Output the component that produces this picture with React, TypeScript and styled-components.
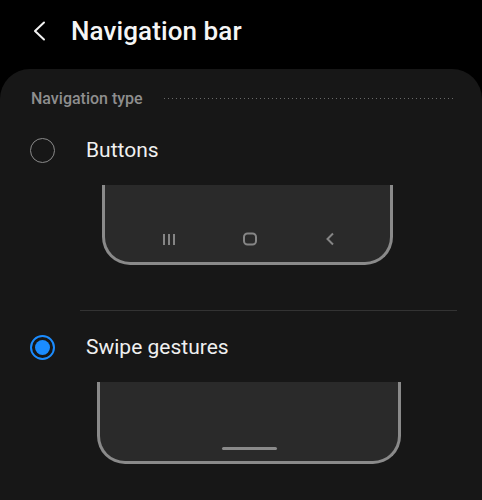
import React from "react";
import styled, { createGlobalStyle } from "styled-components";

const GlobalStyle = createGlobalStyle`
  html, body {
    margin: 0;
    padding: 0;
    background: #000;
  }
  body {
    font-family: Roboto, "Noto Sans", "Liberation Sans", sans-serif;
    -webkit-font-smoothing: antialiased;
  }
`;

type NavMode = "buttons" | "gestures";

const options: { id: NavMode; label: string; width: number; left: number; height: number }[] = [
  { id: "buttons", label: "Buttons", width: 291, left: 102, height: 80 },
  { id: "gestures", label: "Swipe gestures", width: 304, left: 97, height: 82 },
];

export default function App() {
  const [mode, setMode] = React.useState<NavMode>("gestures");

  return (
    <Screen>
      <GlobalStyle />
      <TopBar>
        <BackButton aria-label="Back">
          <svg width="14" height="20" viewBox="0 0 14 20">
            <path d="M12 1.5 L3 10 L12 18.5" fill="none" stroke="#f2f2f2" strokeWidth="2" strokeLinecap="round" strokeLinejoin="round" />
          </svg>
        </BackButton>
        <Title>Navigation bar</Title>
      </TopBar>

      <Card>
        <SectionHeader>
          <SectionTitle>Navigation type</SectionTitle>
          <DottedRule />
        </SectionHeader>

        {options.map((opt, i) => (
          <React.Fragment key={opt.id}>
            {i > 0 && <Divider />}
            <OptionRow onClick={() => setMode(opt.id)}>
              <Radio $checked={mode === opt.id} />
              <OptionLabel>{opt.label}</OptionLabel>
            </OptionRow>
            <Preview $width={opt.width} $left={opt.left} $height={opt.height}>
              {opt.id === "buttons" ? (
                <NavKeys>
                  <svg width="14" height="13" viewBox="0 0 14 13">
                    <path d="M2 1v11M7 1v11M12 1v11" stroke="#858585" strokeWidth="2" />
                  </svg>
                  <svg width="16" height="14" viewBox="0 0 16 14">
                    <rect x="2" y="1.5" width="12" height="11" rx="3.5" fill="none" stroke="#858585" strokeWidth="2" />
                  </svg>
                  <svg width="12" height="14" viewBox="0 0 12 14">
                    <path d="M9 1.5 L3.5 7 L9 12.5" fill="none" stroke="#858585" strokeWidth="2" />
                  </svg>
                </NavKeys>
              ) : (
                <GestureHandle />
              )}
            </Preview>
          </React.Fragment>
        ))}
      </Card>
    </Screen>
  );
}

const Screen = styled.div`
  width: 482px;
  height: 500px;
  overflow: hidden;
  background: #000;
  display: flex;
  flex-direction: column;
`;

const TopBar = styled.div`
  height: 69px;
  display: flex;
  align-items: center;
  padding-left: 32px;
  box-sizing: border-box;
  flex-shrink: 0;
`;

const BackButton = styled.div`
  width: 14px;
  height: 20px;
  display: flex;
  margin-top: -7px;
`;

const Title = styled.h1`
  margin: -7px 0 0 25px;
  font-size: 26px;
  font-weight: 500;
  color: #f5f5f5;
  letter-spacing: 0.1px;
`;

const Card = styled.div`
  flex: 1;
  background: #171717;
  border-radius: 30px 30px 0 0;
  padding-top: 19px;
  display: flex;
  flex-direction: column;
`;

const SectionHeader = styled.div`
  height: 20px;
  display: flex;
  align-items: center;
  padding: 0 26px 0 31px;
`;

const SectionTitle = styled.span`
  font-size: 16px;
  font-weight: 500;
  color: #8e8e8e;
  white-space: nowrap;
`;

const DottedRule = styled.div`
  flex: 1;
  height: 1px;
  margin-left: 21px;
  background-image: linear-gradient(to right, #6a6a6a 1px, transparent 1px);
  background-size: 4px 1px;
`;

const OptionRow = styled.div`
  height: 48px;
  margin-top: 18px;
  display: flex;
  align-items: center;
  padding-left: 30px;
  cursor: pointer;

  & + div {
    margin-top: 11px;
  }
`;

const Radio = styled.span<{ $checked: boolean }>`
  width: 25px;
  height: 25px;
  box-sizing: border-box;
  border-radius: 50%;
  border: ${(p) => (p.$checked ? "2px solid #1b8cff" : "1.5px solid #8a8a8a")};
  display: flex;
  align-items: center;
  justify-content: center;

  &::after {
    content: "";
    display: ${(p) => (p.$checked ? "block" : "none")};
    width: 15px;
    height: 15px;
    border-radius: 50%;
    background: #1b8cff;
  }
`;

const OptionLabel = styled.span`
  margin-left: 31px;
  font-size: 21px;
  color: #f0f0f0;
`;

const Preview = styled.div<{ $width: number; $left: number; $height: number }>`
  width: ${(p) => p.$width}px;
  height: ${(p) => p.$height}px;
  margin-left: ${(p) => p.$left}px;
  box-sizing: border-box;
  background: #2a2a2a;
  border: 3px solid #8a8a8a;
  border-top: none;
  border-radius: 0 0 28px 28px;
  display: flex;
  align-items: flex-end;
  justify-content: center;
  flex-shrink: 0;
`;

const NavKeys = styled.div`
  display: flex;
  align-items: center;
  gap: 66px;
  margin-bottom: 16px;
  margin-left: 2px;
`;

const GestureHandle = styled.div`
  width: 55px;
  height: 3px;
  border-radius: 2px;
  background: #8a8a8a;
  margin-bottom: 11px;
`;

const Divider = styled.div`
  height: 1px;
  width: 377px;
  margin: 45px 0 0 80px;
  background: #333;
  flex-shrink: 0;

  & + div {
    margin-top: 12px;
  }
`;
